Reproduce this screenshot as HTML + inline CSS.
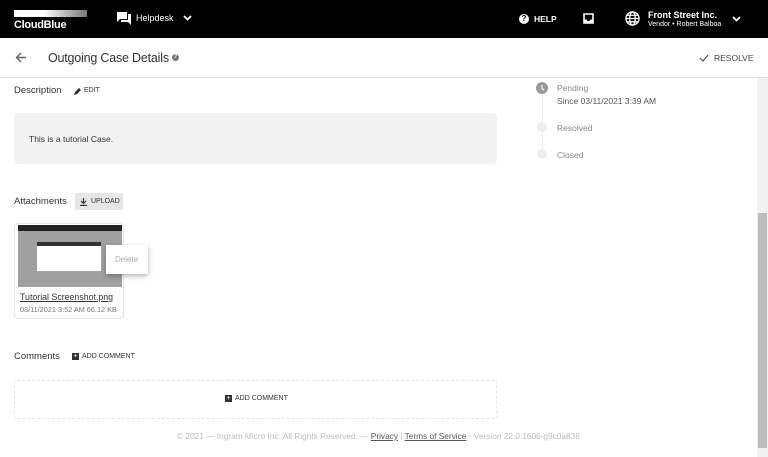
<!DOCTYPE html>
<html><head><style>
*{box-sizing:border-box;margin:0;padding:0}
body{width:768px;height:457px;overflow:hidden;background:#fff;font-family:"Liberation Sans",sans-serif;color:#212121;position:relative}
.abs{position:absolute;white-space:nowrap}
.hdr{left:0;top:0;width:768px;height:38px;background:#000;color:#fff}
.sub{left:0;top:38px;width:768px;height:40px;border-bottom:1px solid #e0e0e0;background:#fff}
</style></head><body>
<div class="abs hdr">
 <div class="abs" style="left:14px;top:10px;width:73px;height:7px;background:linear-gradient(90deg,#fff 40%,#777)"></div>
 <div class="abs" style="left:14px;top:19px;font-size:11px;font-weight:bold;letter-spacing:-0.3px">CloudBlue</div>
 <svg class="abs" style="left:117px;top:12px" width="14" height="13" viewBox="0 0 14 13"><path d="M0 0h10v7H3L0 10z M4 8h7V2h3v11l-3-3H4z" fill="#fff"/></svg>
 <div class="abs" style="left:136px;top:13px;font-size:9px">Helpdesk</div>
 <svg class="abs" style="left:183px;top:15px" width="9" height="6"><path d="M1 1l3.5 3.5L8 1" stroke="#fff" stroke-width="1.8" fill="none"/></svg>
 <div class="abs" style="left:519px;top:14px;width:10px;height:10px;border-radius:50%;background:#fff;color:#000;font-size:8px;font-weight:bold;text-align:center;line-height:10px">?</div>
 <div class="abs" style="left:534px;top:14px;font-size:8.5px;font-weight:bold">HELP</div>
 <svg class="abs" style="left:583px;top:13px" width="11" height="11" viewBox="0 0 11 11"><path d="M1 1h9v9H1z" fill="none" stroke="#fff" stroke-width="1.6"/><path d="M1 6.5h2.5l1 1.5h2l1-1.5H10V10H1z" fill="#fff"/></svg>
 <svg class="abs" style="left:625px;top:11px" width="15" height="15" viewBox="0 0 16 16"><g fill="none" stroke="#fff" stroke-width="1.4"><circle cx="8" cy="8" r="7"/><ellipse cx="8" cy="8" rx="3" ry="7"/><path d="M1 8h14M2 4.5h12M2 11.5h12"/></g></svg>
 <div class="abs" style="left:648px;top:10px;font-size:9px;font-weight:bold">Front Street Inc.</div>
 <div class="abs" style="left:648px;top:21px;font-size:7px">Vendor • Robert Balboa</div>
 <svg class="abs" style="left:732px;top:16px" width="9" height="6"><path d="M1 1l3.5 3.5L8 1" stroke="#fff" stroke-width="1.8" fill="none"/></svg>
</div>
<div class="abs sub">
 <svg class="abs" style="left:15px;top:14px" width="12" height="11"><path d="M11 5.5H2M6 1L1.5 5.5 6 10" stroke="#666" stroke-width="1.4" fill="none"/></svg>
 <div class="abs" style="left:48px;top:13px;font-size:12.5px;color:#333;letter-spacing:-0.2px">Outgoing Case Details</div>
 <div class="abs" style="left:172px;top:16px;width:7px;height:7px;border-radius:50%;background:#777;color:#fff;font-size:6px;line-height:7px;text-align:center;font-weight:bold">?</div>
 <svg class="abs" style="left:699px;top:16px" width="10" height="8"><path d="M1 4l3 3 5-6" stroke="#555" stroke-width="1.2" fill="none"/></svg>
 <div class="abs" style="left:714px;top:15px;font-size:8.5px;color:#444">RESOLVE</div>
</div>
<div class="abs" style="left:14px;top:85px;font-size:9.5px;color:#333">Description</div>
<svg class="abs" style="left:74px;top:88px" width="7" height="7"><path d="M0 7l1-3 4-4 2 2-4 4z" fill="#333"/></svg>
<div class="abs" style="left:84px;top:87px;font-size:7px;color:#333">EDIT</div>
<div class="abs" style="left:14px;top:113px;width:483px;height:51px;background:#f2f2f2;border-radius:4px"></div>
<div class="abs" style="left:29px;top:134px;font-size:8.5px;color:#333">This is a tutorial Case.</div>
<div class="abs" style="left:14px;top:196px;font-size:9.5px;color:#333">Attachments</div>
<div class="abs" style="left:75px;top:193px;width:48px;height:17px;background:#e6e6e6;border-radius:2px"></div>
<svg class="abs" style="left:80px;top:198px" width="7" height="8"><path d="M3.5 0v5M1 3l2.5 2.5L6 3M0 7.5h7" stroke="#333" stroke-width="1.2" fill="none"/></svg>
<div class="abs" style="left:91px;top:198px;font-size:7px;color:#333">UPLOAD</div>
<div class="abs" style="left:14px;top:223px;width:110px;height:96px;border:1px solid #e6e6e6;border-radius:4px"></div>
<div class="abs" style="left:18px;top:225px;width:104px;height:62px;background:#a0a0a0"></div>
<div class="abs" style="left:18px;top:225px;width:104px;height:6px;background:#222"></div>
<div class="abs" style="left:37px;top:242px;width:64px;height:29px;background:#fff;border-top:4px solid #333"></div>
<div class="abs" style="left:106px;top:245px;width:42px;height:29px;background:#fff;box-shadow:0 2px 5px rgba(0,0,0,.3)"></div>
<div class="abs" style="left:115px;top:255px;font-size:8px;color:#aaa">Delete</div>
<div class="abs" style="left:20px;top:292px;font-size:8.8px;color:#333;text-decoration:underline">Tutorial Screenshot.png</div>
<div class="abs" style="left:20px;top:305px;font-size:7.3px;color:#777">03/11/2021 3:52 AM 66.12 KB</div>
<div class="abs" style="left:14px;top:351px;font-size:9.5px;color:#333">Comments</div>
<div class="abs" style="left:72px;top:353px;width:7px;height:7px;background:#333;color:#fff;font-size:7px;line-height:7px;text-align:center">+</div>
<div class="abs" style="left:82px;top:353px;font-size:7px;color:#333">ADD COMMENT</div>
<div class="abs" style="left:14px;top:380px;width:483px;height:39px;border:1px dashed #e6e6e6;border-radius:3px"></div>
<div class="abs" style="left:225px;top:395px;width:7px;height:7px;background:#333;color:#fff;font-size:7px;line-height:7px;text-align:center">+</div>
<div class="abs" style="left:235px;top:395px;font-size:7px;color:#333">ADD COMMENT</div>
<div class="abs" style="left:177px;top:431px;font-size:8.3px;color:#bbb">© 2021 — Ingram Micro Inc. All Rights Reserved. — <u style="color:#555">Privacy</u> | <u style="color:#555">Terms of Service</u> - Version 22.0.1606-g9c0a838</div>
<!-- timeline -->
<div class="abs" style="left:542px;top:92px;width:1px;height:60px;background:#eee"></div>
<div class="abs" style="left:536px;top:82px;width:12px;height:12px;border-radius:50%;background:#999"></div>
<svg class="abs" style="left:536px;top:82px" width="12" height="12"><path d="M6 3v3.5l2 1.5" stroke="#fff" stroke-width="1.1" fill="none"/></svg>
<div class="abs" style="left:537px;top:122px;width:10px;height:10px;border-radius:50%;background:#eee"></div>
<div class="abs" style="left:537px;top:149px;width:10px;height:10px;border-radius:50%;background:#eee"></div>
<div class="abs" style="left:557px;top:83px;font-size:8.5px;color:#888">Pending</div>
<div class="abs" style="left:557px;top:96px;font-size:8.5px;color:#555">Since 03/11/2021 3:39 AM</div>
<div class="abs" style="left:557px;top:123px;font-size:8.5px;color:#888">Resolved</div>
<div class="abs" style="left:557px;top:150px;font-size:8.5px;color:#888">Closed</div>
<!-- scrollbar -->
<div class="abs" style="left:757px;top:78px;width:11px;height:379px;background:#f1f1f1"></div>
<div class="abs" style="left:758px;top:213px;width:9px;height:235px;background:#bdbdbd"></div>
</body></html>
